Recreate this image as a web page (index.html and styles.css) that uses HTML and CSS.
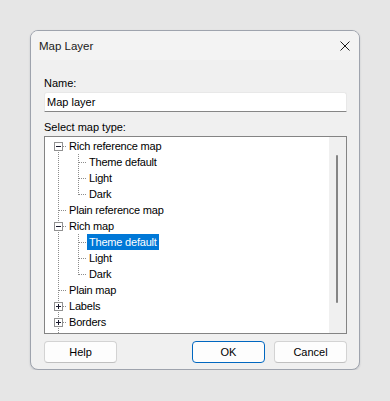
FILE: index.html
```html
<!DOCTYPE html>
<html>
<head>
<meta charset="utf-8">
<link rel="stylesheet" href="styles.css">
</head>
<body>
<div class="dialog">
  <div class="titlebar">
    <span class="title">Map Layer</span>
    <svg class="close" width="10" height="10" viewBox="0 0 10 10"><path d="M0.5 0.5L9.5 9.5M9.5 0.5L0.5 9.5" stroke="#1a1a1a" stroke-width="1" fill="none"/></svg>
  </div>
  <div class="content">
    <div class="lbl">Name:</div>
    <div class="input">Map layer</div>
    <div class="lbl gap">Select map type:</div>
    <div class="tree">
      <div class="list">
        <div class="row">
          <div class="conn root"><i class="vb"></i><i class="h"></i><span class="exp"><svg width="7" height="7"><rect x="1" y="3" width="5" height="1" fill="#1a1a2e"/></svg></span></div>
          <span class="label">Rich reference map</span>
        </div>
        <div class="row">
          <div class="conn root"><i class="vf"></i></div>
          <div class="conn child"><i class="vf"></i><i class="h"></i></div>
          <span class="label">Theme default</span>
        </div>
        <div class="row">
          <div class="conn root"><i class="vf"></i></div>
          <div class="conn child"><i class="vf"></i><i class="h"></i></div>
          <span class="label">Light</span>
        </div>
        <div class="row">
          <div class="conn root"><i class="vf"></i></div>
          <div class="conn child"><i class="vt"></i><i class="h"></i></div>
          <span class="label">Dark</span>
        </div>
        <div class="row">
          <div class="conn root"><i class="vf"></i><i class="h"></i></div>
          <span class="label">Plain reference map</span>
        </div>
        <div class="row">
          <div class="conn root"><i class="vf"></i><i class="h"></i><span class="exp"><svg width="7" height="7"><rect x="1" y="3" width="5" height="1" fill="#1a1a2e"/></svg></span></div>
          <span class="label">Rich map</span>
        </div>
        <div class="row">
          <div class="conn root"><i class="vf"></i></div>
          <div class="conn child"><i class="vf"></i><i class="h"></i></div>
          <span class="label sel">Theme default</span>
        </div>
        <div class="row">
          <div class="conn root"><i class="vf"></i></div>
          <div class="conn child"><i class="vf"></i><i class="h"></i></div>
          <span class="label">Light</span>
        </div>
        <div class="row">
          <div class="conn root"><i class="vf"></i></div>
          <div class="conn child"><i class="vt"></i><i class="h"></i></div>
          <span class="label">Dark</span>
        </div>
        <div class="row">
          <div class="conn root"><i class="vf"></i><i class="h"></i></div>
          <span class="label">Plain map</span>
        </div>
        <div class="row">
          <div class="conn root"><i class="vf"></i><i class="h"></i><span class="exp"><svg width="7" height="7"><rect x="1" y="3" width="5" height="1" fill="#1a1a2e"/><rect x="3" y="1" width="1" height="5" fill="#1a1a2e"/></svg></span></div>
          <span class="label">Labels</span>
        </div>
        <div class="row">
          <div class="conn root"><i class="vf"></i><i class="h"></i><span class="exp"><svg width="7" height="7"><rect x="1" y="3" width="5" height="1" fill="#1a1a2e"/><rect x="3" y="1" width="1" height="5" fill="#1a1a2e"/></svg></span></div>
          <span class="label">Borders</span>
        </div>
        <div class="row">
          <div class="conn root"><i class="vf"></i></div>
        </div>
      </div>
      <div class="scrollbar"><div class="thumb"></div></div>
    </div>
    <div class="buttons">
      <button class="btn">Help</button>
      <span class="spacer"></span>
      <button class="btn ok">OK</button>
      <button class="btn">Cancel</button>
    </div>
  </div>
</div>
</body>
</html>
```

FILE: styles.css
```css
body {
  margin: 0;
  background: #e6e6e6;
  font-family: "Liberation Sans", Arial, sans-serif;
  font-size: 11px;
  color: #000;
}

.dialog {
  margin: 30px 0 0 30px;
  width: 330px;
  box-sizing: border-box;
  border: 1px solid #9ea3ad;
  border-radius: 8px;
  background: #f0f0f0;
  overflow: hidden;
  box-shadow: 0 1px 2px rgba(40, 50, 80, 0.18);
}

.titlebar {
  height: 29px;
  display: flex;
  align-items: center;
  justify-content: space-between;
  padding: 0 9px 0 8px;
  background: #f3f3f3;
}

.title {
  font-size: 11.5px;
  color: #1a1a1a;
}

.close {
  display: block;
}

.content {
  display: flex;
  flex-direction: column;
  padding: 15px 12px 6px 13px;
}

.lbl {
  height: 16px;
  line-height: 16px;
}

.lbl.gap {
  margin-top: 7px;
  margin-bottom: 1px;
}

.input {
  margin-top: 1px;
  height: 20px;
  box-sizing: border-box;
  background: #fff;
  border: 1px solid #e8e8e8;
  border-bottom-color: #868686;
  border-radius: 3px 3px 0 0;
  padding: 0 2px;
  line-height: 18px;
}

.tree {
  height: 198px;
  box-sizing: border-box;
  border: 1px solid #848484;
  background: #fff;
  display: flex;
  overflow: hidden;
}

.list {
  flex: 1;
  padding-top: 1px;
  overflow: hidden;
}

.row {
  display: flex;
  height: 16px;
}

.conn {
  display: grid;
  grid-template-rows: 8px 1px 7px;
  height: 16px;
  flex: none;
}

.conn.root {
  grid-template-columns: 13px 1px 8px;
}

.conn.child {
  grid-template-columns: 11px 1px 8px;
}

.conn i {
  display: block;
}

.vf {
  grid-column: 2;
  grid-row: 1 / 4;
}

.vt {
  grid-column: 2;
  grid-row: 1 / 3;
}

.vb {
  grid-column: 2;
  grid-row: 2 / 4;
}

.vf, .vt, .vb {
  background: repeating-linear-gradient(to bottom, #8c8c8c 0 1px, transparent 1px 2px);
}

.h {
  grid-column: 3;
  grid-row: 2;
  background: repeating-linear-gradient(to right, #8c8c8c 0 1px, transparent 1px 2px);
}

.exp {
  grid-area: 1 / 1 / 4 / 4;
  align-self: start;
  justify-self: start;
  margin: 4px 0 0 9px;
  width: 9px;
  height: 9px;
  box-sizing: border-box;
  border: 1px solid #919191;
  background: #fff;
  z-index: 1;
  display: flex;
}

.exp svg {
  display: block;
}

.label {
  line-height: 16px;
  padding: 0 2px;
  white-space: nowrap;
  letter-spacing: -0.2px;
}

.label.sel {
  background: #0078d7;
  color: #fff;
}

.scrollbar {
  width: 17px;
  flex: none;
  background: #f0f0f0;
  box-sizing: border-box;
  padding: 18px 0 0 7px;
}

.thumb {
  width: 2px;
  height: 148px;
  background: #858585;
  border-radius: 1px;
}

.buttons {
  display: flex;
  margin-top: 7px;
}

.spacer {
  flex: 1;
}

.btn {
  width: 73px;
  height: 22px;
  box-sizing: border-box;
  border: 1px solid #d3d3d3;
  border-bottom-color: #c0c0c0;
  border-radius: 4px;
  background: #fdfdfd;
  font: inherit;
  color: #000;
  padding: 0;
  display: flex;
  align-items: center;
  justify-content: center;
}

.btn.ok {
  border-color: #0067c0;
  margin-right: 9px;
}
```
